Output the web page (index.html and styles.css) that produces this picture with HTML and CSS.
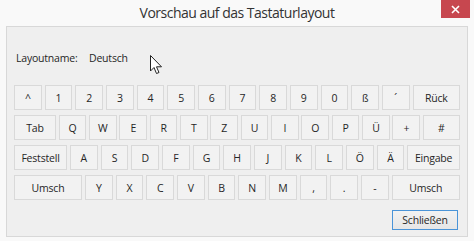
FILE: index.html
```html
<!DOCTYPE html>
<html lang="de">
<head>
    <meta charset="UTF-8" />
    <meta name="viewport" content="width=device-width, initial-scale=1.0" />
    <title>Vorschau auf das Tastaturlayout</title>
    <link rel="stylesheet" href="styles.css">
</head>
<body>
    <div class="fenster">
        <div class="titelleiste">
            <span></span>
            <span class="titel">Vorschau auf das Tastaturlayout</span>
            <button class="schliessen-x" title="Schließen">
                <svg width="9" height="9" viewBox="0 0 9 9">
                    <path d="M1 1 L8 8 M8 1 L1 8" stroke="#fff" stroke-width="1.6" fill="none" />
                </svg>
            </button>
        </div>

        <div class="panel">
            <div class="info">
                <span class="info-label">Layoutname:</span>
                <span class="info-wert">Deutsch</span>
                <svg class="zeiger" width="13" height="20" viewBox="0 0 13 20">
                    <path d="M0.5 0.5 L0.5 16 L4 12.5 L6.5 18.5 L9 17.5 L6.5 11.8 L11.5 11.8 Z" fill="#fff" stroke="#222" stroke-width="1" stroke-linejoin="round" />
                </svg>
            </div>

            <div class="tastatur">
                <div class="reihe">
                    <div class="taste">^</div>
                    <div class="taste">1</div>
                    <div class="taste">2</div>
                    <div class="taste">3</div>
                    <div class="taste">4</div>
                    <div class="taste">5</div>
                    <div class="taste">6</div>
                    <div class="taste">7</div>
                    <div class="taste">8</div>
                    <div class="taste">9</div>
                    <div class="taste">0</div>
                    <div class="taste">ß</div>
                    <div class="taste">´</div>
                    <div class="taste breit">Rück</div>
                </div>
                <div class="reihe eng">
                    <div class="taste tab">Tab</div>
                    <div class="taste">Q</div>
                    <div class="taste">W</div>
                    <div class="taste">E</div>
                    <div class="taste">R</div>
                    <div class="taste">T</div>
                    <div class="taste">Z</div>
                    <div class="taste">U</div>
                    <div class="taste">I</div>
                    <div class="taste">O</div>
                    <div class="taste">P</div>
                    <div class="taste">Ü</div>
                    <div class="taste">+</div>
                    <div class="taste breit">#</div>
                </div>
                <div class="reihe">
                    <div class="taste feststell">Feststell</div>
                    <div class="taste">A</div>
                    <div class="taste">S</div>
                    <div class="taste">D</div>
                    <div class="taste">F</div>
                    <div class="taste">G</div>
                    <div class="taste">H</div>
                    <div class="taste">J</div>
                    <div class="taste">K</div>
                    <div class="taste">L</div>
                    <div class="taste">Ö</div>
                    <div class="taste">Ä</div>
                    <div class="taste breit">Eingabe</div>
                </div>
                <div class="reihe">
                    <div class="taste umsch">Umsch</div>
                    <div class="taste">Y</div>
                    <div class="taste">X</div>
                    <div class="taste">C</div>
                    <div class="taste">V</div>
                    <div class="taste">B</div>
                    <div class="taste">N</div>
                    <div class="taste">M</div>
                    <div class="taste">,</div>
                    <div class="taste">.</div>
                    <div class="taste">-</div>
                    <div class="taste breit">Umsch</div>
                </div>
            </div>

            <div class="fuss">
                <button class="knopf">Schließen</button>
            </div>
        </div>
    </div>
</body>
</html>
```

FILE: styles.css
```css
:root {
    --fenster-bg: #f9f9f9;
    --panel-bg: #efefef;
    --panel-rand: #d8d8d8;
    --taste-bg: #f2f2f2;
    --taste-rand: #d9d9d9;
    --text: #262626;
    --rot: #c7474f;
    --blau: #4a94d8;
}

body {
    margin: 0;
    font-family: "Open Sans", "Noto Sans", sans-serif;
    color: var(--text);
    background: var(--fenster-bg);
}

.fenster {
    width: 474px;
    height: 241px;
    background: var(--fenster-bg);
    display: flex;
    flex-direction: column;
}

.titelleiste {
    height: 26px;
    display: grid;
    grid-template-columns: 1fr auto 1fr;
    align-items: start;
}

.titel {
    font-size: 14px;
    letter-spacing: -0.5px;
    color: #333;
    line-height: 26px;
}

.schliessen-x {
    justify-self: end;
    margin-right: 4px;
    width: 29px;
    height: 18px;
    border: none;
    padding: 0;
    background: var(--rot);
    display: flex;
    align-items: center;
    justify-content: center;
}

.panel {
    margin: 0 6px 4px 6px;
    flex: 1;
    background: var(--panel-bg);
    border: 1px solid var(--panel-rand);
    padding: 0 7px;
}

.info {
    height: 58px;
    box-sizing: border-box;
    padding: 4px 0 0 2px;
    display: flex;
    align-items: center;
    font-size: 10.5px;
    letter-spacing: -0.2px;
}

.info-label {
    width: 73px;
}

.zeiger {
    margin: 14px 0 0 22px;
}

.tastatur {
    display: flex;
    flex-direction: column;
    gap: 5px;
}

.reihe {
    display: flex;
    gap: 3px;
}

.reihe.eng {
    gap: 2.7px;
}

.taste {
    width: 27.67px;
    height: 25px;
    box-sizing: border-box;
    background: var(--taste-bg);
    border: 1px solid var(--taste-rand);
    font-size: 10.5px;
    letter-spacing: -0.2px;
    display: flex;
    align-items: center;
    justify-content: center;
}

.taste.breit {
    flex: 1;
}

.taste.tab {
    width: 42px;
}

.taste.feststell {
    width: 53px;
}

.taste.umsch {
    width: 68px;
}

.fuss {
    display: flex;
    justify-content: flex-end;
    margin-top: 10px;
    padding-right: 2px;
}

.knopf {
    width: 66px;
    height: 20px;
    padding: 0;
    font-family: inherit;
    font-size: 10.5px;
    letter-spacing: -0.2px;
    color: var(--text);
    background: linear-gradient(#f2f2f2, #e6e6e6);
    border: 1px solid var(--blau);
}
```
